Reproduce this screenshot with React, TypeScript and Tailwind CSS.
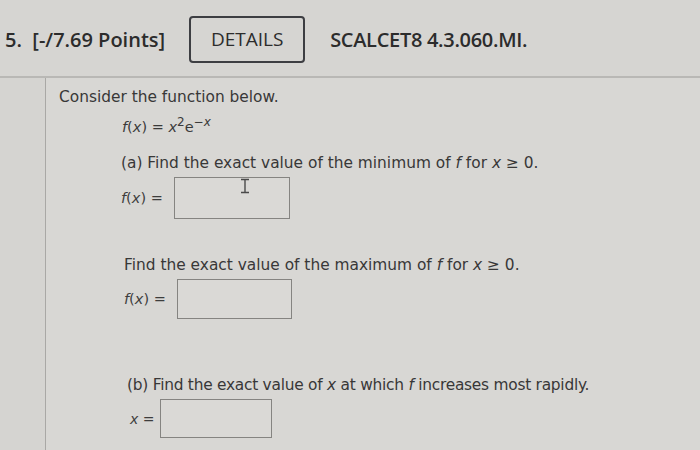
import React from 'react';

const body = { fontFamily: '"DejaVu Sans", Verdana, sans-serif' };
const head = { fontFamily: '"Open Sans", "Liberation Sans", sans-serif' };

const AnswerBox: React.FC<{ w: string; h: string; children?: React.ReactNode }> = ({ w, h, children }) => (
  <div className={`relative border border-[#858481] bg-[#dad9d6] ${w} ${h}`}>{children}</div>
);

const Fx = () => (
  <span>
    <i>f</i>(<i>x</i>)
  </span>
);

// text cursor (I-beam) hovering over the first answer box
const IBeam = () => (
  <svg width="10" height="16" viewBox="0 0 10 16" className="absolute left-[65px] top-[0px]">
    <path d="M1 1.5h8M1 14.5h8M5 1.5v13" stroke="#4a4a4a" strokeWidth="1.4" fill="none" />
  </svg>
);

const App: React.FC = () => {
  return (
    <div className="w-[700px] h-[450px] overflow-hidden bg-[#d8d7d4] text-[#333231] flex flex-col">
      {/* question header */}
      <div className="h-[78px] pt-[3px] flex items-center border-b-2 border-[#b9b8b5] bg-[#d6d5d2] shrink-0" style={head}>
        <div className="pl-[5px] text-[20px] font-semibold text-[#2c2c2c] tracking-[0px]">5.&nbsp; [-/7.69 Points]</div>
        <div className="ml-[24px] w-[116px] h-[47px] border-2 border-[#3d3e42] rounded-[4px] flex items-center justify-center text-[19px] text-[#2c2c2c]">
          DETAILS
        </div>
        <div className="ml-[25px] text-[20px] font-semibold text-[#2c2c2c] tracking-[-0.3px]">SCALCET8 4.3.060.MI.</div>
      </div>

      <div className="flex flex-1">
        <div className="w-[46px] border-r border-[#a9a8a5] bg-[#d5d4d1] shrink-0" />
        <div className="flex-1 pl-[13px] text-[15.4px] leading-[20px] text-[#383838]" style={body}>
          <div className="mt-[9px]">Consider the function below.</div>

          <div className="mt-[10px] ml-[63px] text-[14.5px] text-[#3a3a3a]">
            <Fx /> = <i>x</i>
            <span className="relative -top-[6px] text-[12px]">2</span>e
            <span className="relative -top-[6px] text-[12px]">
              −<i>x</i>
            </span>
          </div>

          <div className="mt-[15px] ml-[62px]">
            (a) Find the exact value of the minimum of <i>f</i> for <i>x</i> ≥ 0.
          </div>

          <div className="mt-[4px] ml-[62px] flex items-center gap-[11px]">
            <span className="text-[14.5px] text-[#3d3d3d]">
              <Fx /> =
            </span>
            <AnswerBox w="w-[116px]" h="h-[42px]">
              <IBeam />
            </AnswerBox>
          </div>

          <div className="mt-[36px] ml-[65px]">
            Find the exact value of the maximum of <i>f</i> for <i>x</i> ≥ 0.
          </div>

          <div className="mt-[4px] ml-[65px] flex items-center gap-[11px]">
            <span className="text-[14.5px] text-[#3d3d3d]">
              <Fx /> =
            </span>
            <AnswerBox w="w-[115px]" h="h-[40px]" />
          </div>

          <div className="mt-[56px] ml-[68px] tracking-[-0.25px]">
            (b) Find the exact value of <i>x</i> at which <i>f</i> increases most rapidly.
          </div>

          <div className="mt-[4px] ml-[71px] flex items-center gap-[6px]">
            <span className="text-[14px] text-[#3d3d3d]">
              <i>x</i> =
            </span>
            <AnswerBox w="w-[112px]" h="h-[39px]" />
          </div>
        </div>
      </div>
    </div>
  );
};

export default App;
